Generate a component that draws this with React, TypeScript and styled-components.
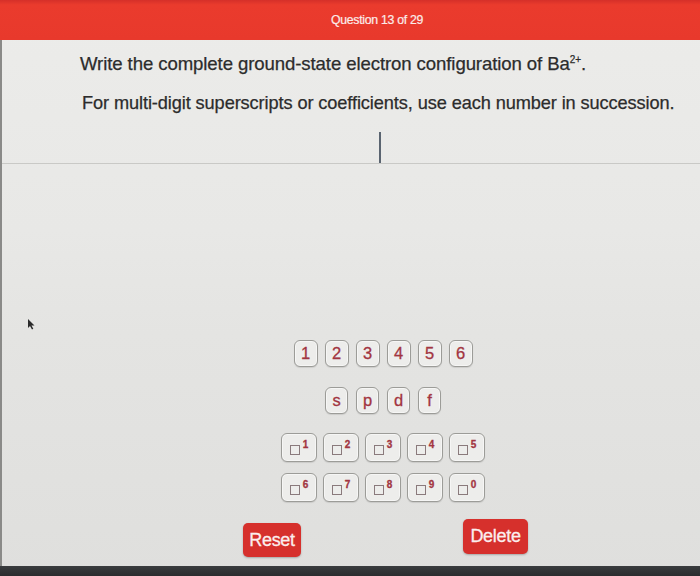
import React from "react";
import styled, { createGlobalStyle } from "styled-components";

const GlobalStyle = createGlobalStyle`
  html, body { margin: 0; padding: 0; }
  body {
    background: #e3e3e1;
    font-family: "Liberation Sans", Arial, sans-serif;
  }
`;

const Page = styled.div`
  position: relative;
  width: 700px;
  height: 576px;
  display: flex;
  flex-direction: column;
  overflow: hidden;
  background: linear-gradient(180deg, #ececea 0%, #e8e8e6 40%, #e4e4e2 58%, #dfdfdd 100%);
`;

const Header = styled.header`
  height: 40px;
  flex: none;
  background: linear-gradient(180deg, #d52f29 0%, #ea3b2d 12%, #e8392c 100%);
  display: flex;
  align-items: center;
  justify-content: center;
  padding-left: 54px;
  color: #fbecea;
  font-size: 12.3px;
  letter-spacing: -0.3px;
  -webkit-text-stroke: 0.2px #fbecea;
`;

const Prompt = styled.section`
  padding: 13px 0 0 80px;
  display: flex;
  flex-direction: column;
  gap: 17px;
`;

const PromptLine = styled.p<{ $indent?: number; $size: number }>`
  margin: 0 0 0 ${(p) => p.$indent ?? 0}px;
  font-size: ${(p) => p.$size}px;
  line-height: 22px;
  color: #2c2c2c;
  letter-spacing: -0.1px;
  -webkit-text-stroke: 0.25px #2c2c2c;
`;

const Sup = styled.sup`
  font-size: 10px;
  vertical-align: 7px;
  line-height: 0;
`;

const AnswerBox = styled.div`
  margin-top: 18px;
  height: 31px;
  border-bottom: 1px solid #c9c9c6;
  display: flex;
  justify-content: center;
  padding-left: 60px;
`;

const Caret = styled.div`
  width: 1.5px;
  height: 31px;
  background: #5a6470;
`;

const Keypad = styled.section`
  margin-top: 176px;
  padding-left: 66px;
  display: flex;
  flex-direction: column;
  align-items: center;
`;

const KeyRow = styled.div<{ $gap: number; $mt: number }>`
  display: flex;
  gap: ${(p) => p.$gap}px;
  margin-top: ${(p) => p.$mt}px;
`;

const Key = styled.button<{ $w: number; $h: number }>`
  width: ${(p) => p.$w}px;
  height: ${(p) => p.$h}px;
  padding: 0;
  border: 1.5px solid #9c9c98;
  border-radius: 6px;
  background: #ededeb;
  color: #a23541;
  font-family: "Liberation Sans", Arial, sans-serif;
  font-size: 16.5px;
  -webkit-text-stroke: 0.3px #a23541;
  display: flex;
  align-items: center;
  justify-content: center;
  box-shadow: 0 1px 1px rgba(0, 0, 0, 0.1), inset 0 0 0 1px rgba(255, 255, 255, 0.5);
`;

const SupKeyContent = styled.span`
  display: flex;
  align-items: flex-start;
  gap: 3px;
`;

const BoxGlyph = styled.span`
  width: 8px;
  height: 8px;
  border: 1px solid #8a7a7c;
  margin-top: 5px;
`;

const SupDigit = styled.span`
  font-size: 10px;
  line-height: 9px;
  font-weight: bold;
  color: #a23541;
`;

const Footer = styled.footer`
  margin-top: 17px;
  margin-left: 243px;
  width: 285px;
  display: flex;
  justify-content: space-between;
  align-items: flex-start;
`;

const ActionButton = styled.button<{ $w: number; $h: number; $mt: number }>`
  width: ${(p) => p.$w}px;
  height: ${(p) => p.$h}px;
  margin-top: ${(p) => p.$mt}px;
  border: none;
  border-radius: 5px;
  background: #d6302c;
  color: #fbeeee;
  font-family: "Liberation Sans", Arial, sans-serif;
  font-size: 18px;
  letter-spacing: -0.3px;
  -webkit-text-stroke: 0.3px #fbeeee;
  display: flex;
  align-items: center;
  justify-content: center;
  box-shadow: 0 1px 2px rgba(0, 0, 0, 0.25);
`;

const BottomBar = styled.div`
  margin-top: auto;
  height: 10px;
  background: linear-gradient(180deg, #3a3c3e 0%, #2a2c2e 100%);
`;

const EdgeShade = styled.div`
  position: absolute;
  left: 0;
  top: 40px;
  bottom: 10px;
  width: 2px;
  background: #8a8a88;
`;

const Pointer = styled.svg`
  position: absolute;
  left: 27px;
  top: 319px;
`;

const numbers = ["1", "2", "3", "4", "5", "6"];
const orbitals = ["s", "p", "d", "f"];
const supRow1 = ["1", "2", "3", "4", "5"];
const supRow2 = ["6", "7", "8", "9", "0"];

function SupKey({ d }: { d: string }) {
  return (
    <Key $w={36} $h={29}>
      <SupKeyContent>
        <BoxGlyph />
        <SupDigit>{d}</SupDigit>
      </SupKeyContent>
    </Key>
  );
}

export default function App() {
  return (
    <>
      <GlobalStyle />
      <Page>
        <Header>Question 13 of 29</Header>
        <Prompt>
          <PromptLine $size={18.6}>
            Write the complete ground-state electron configuration of Ba<Sup>2+</Sup>.
          </PromptLine>
          <PromptLine $indent={2} $size={18.2}>
            For multi-digit superscripts or coefficients, use each number in succession.
          </PromptLine>
        </Prompt>
        <AnswerBox>
          <Caret />
        </AnswerBox>
        <Keypad>
          <KeyRow $gap={7} $mt={0}>
            {numbers.map((n) => (
              <Key key={n} $w={24} $h={27}>
                {n}
              </Key>
            ))}
          </KeyRow>
          <KeyRow $gap={8} $mt={20}>
            {orbitals.map((o) => (
              <Key key={o} $w={23} $h={27}>
                {o}
              </Key>
            ))}
          </KeyRow>
          <KeyRow $gap={6} $mt={19}>
            {supRow1.map((d) => (
              <SupKey key={d} d={d} />
            ))}
          </KeyRow>
          <KeyRow $gap={6} $mt={11}>
            {supRow2.map((d) => (
              <SupKey key={d} d={d} />
            ))}
          </KeyRow>
        </Keypad>
        <Footer>
          <ActionButton $w={58} $h={34} $mt={4}>
            Reset
          </ActionButton>
          <ActionButton $w={65} $h={35} $mt={0}>
            Delete
          </ActionButton>
        </Footer>
        <BottomBar />
        <EdgeShade />
        <Pointer width="8" height="11" viewBox="0 0 8 11">
          <path d="M1 0 L1 9 L3 7 L5 10.5 L6.3 9.8 L4.5 6.5 L7.5 6.5 Z" fill="#2b2b2b" />
        </Pointer>
      </Page>
    </>
  );
}
